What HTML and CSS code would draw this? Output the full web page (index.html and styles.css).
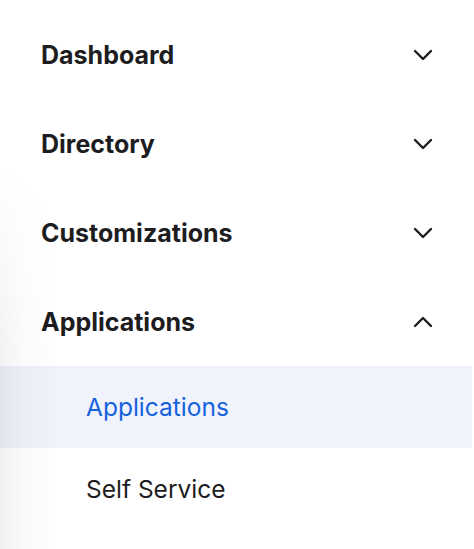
FILE: index.html
```html
<!DOCTYPE html>
<html lang="en">
<head>
<meta charset="utf-8">
<title>Nav</title>
<link rel="stylesheet" href="styles.css">
</head>
<body>
<nav class="sidenav">
  <div class="section">
    <div class="section-head">
      <span class="section-title">Dashboard</span>
      <svg class="chev" viewBox="0 0 20 12" width="20" height="12"><path d="M2 2 L10 10 L18 2" /></svg>
    </div>
  </div>
  <div class="section">
    <div class="section-head">
      <span class="section-title">Directory</span>
      <svg class="chev" viewBox="0 0 20 12" width="20" height="12"><path d="M2 2 L10 10 L18 2" /></svg>
    </div>
  </div>
  <div class="section">
    <div class="section-head">
      <span class="section-title">Customizations</span>
      <svg class="chev" viewBox="0 0 20 12" width="20" height="12"><path d="M2 2 L10 10 L18 2" /></svg>
    </div>
  </div>
  <div class="section open">
    <div class="section-head">
      <span class="section-title">Applications</span>
      <svg class="chev" viewBox="0 0 20 12" width="20" height="12"><path d="M2 10 L10 2 L18 10" /></svg>
    </div>
    <ul class="sub">
      <li class="sub-item active">Applications</li>
      <li class="sub-item">Self Service</li>
    </ul>
  </div>
</nav>
</body>
</html>
```

FILE: styles.css
```css
html, body {
  margin: 0;
  padding: 0;
  background: #ffffff;
}
body {
  font-family: Inter, "Noto Sans", "Liberation Sans", sans-serif;
  color: #1d1d21;
  width: 474px;
  height: 549px;
  overflow: hidden;
}
.sidenav {
  position: relative;
  padding-top: 10px;
  height: 539px;
}
.sidenav::before {
  content: "";
  position: absolute;
  left: 0;
  top: 0;
  bottom: 0;
  width: 60px;
  background: linear-gradient(to right, rgba(0,0,0,0.06), rgba(0,0,0,0.02) 40%, rgba(0,0,0,0));
  -webkit-mask-image: linear-gradient(to bottom, transparent 30%, #000 70%);
  mask-image: linear-gradient(to bottom, transparent 30%, #000 70%);
  pointer-events: none;
  z-index: 2;
}
.section-head {
  height: 89px;
  display: flex;
  align-items: center;
  justify-content: space-between;
  padding: 0 41px 0 41px;
}
.section-title {
  font-size: 25px;
  font-weight: 700;
  letter-spacing: 0;
}
.chev {
  fill: none;
  stroke: #1d1d21;
  stroke-width: 2.4;
  stroke-linecap: round;
  stroke-linejoin: round;
}
.sub {
  list-style: none;
  margin: 0;
  padding: 0;
}
.sub-item {
  height: 82px;
  display: flex;
  align-items: center;
  padding-left: 86px;
  font-size: 24.5px;
  font-weight: 400;
  color: #1d1d21;
  margin-right: 2px;
}
.sub-item.active {
  background: #f0f3fc;
  color: #1662dd;
}
```
